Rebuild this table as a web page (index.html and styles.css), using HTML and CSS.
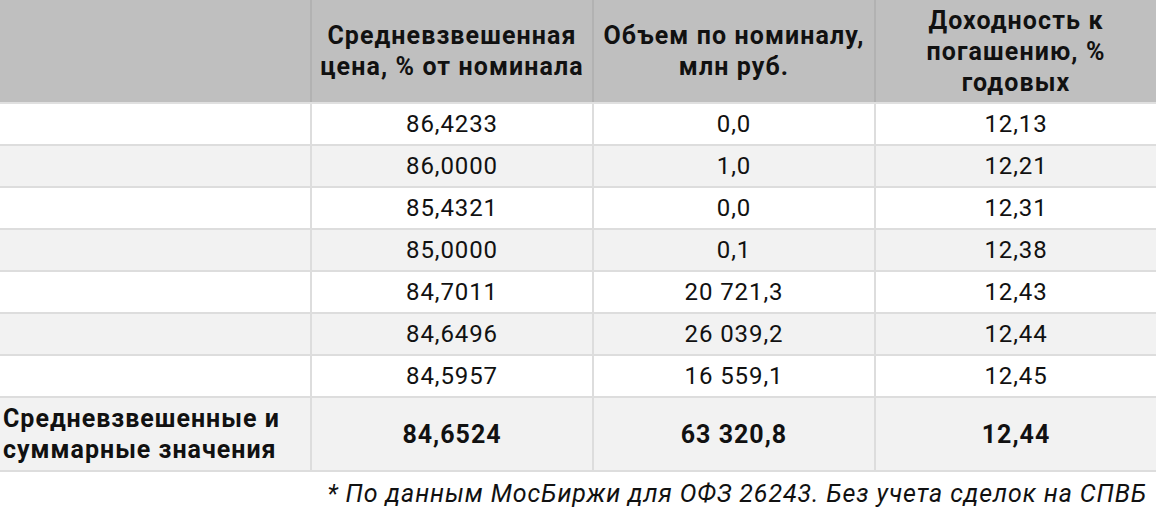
FILE: index.html
```html
<!DOCTYPE html>
<html lang="ru">
<head>
<meta charset="utf-8">
<link rel="stylesheet" href="styles.css">
</head>
<body>
<div class="table">
  <div class="row head">
    <div class="cell"></div>
    <div class="cell">Средневзвешенная<br>цена, % от номинала</div>
    <div class="cell">Объем по номиналу,<br>млн руб.</div>
    <div class="cell">Доходность к<br>погашению, %<br>годовых</div>
  </div>
  <div class="row"><div class="cell"></div><div class="cell">86,4233</div><div class="cell">0,0</div><div class="cell">12,13</div></div>
  <div class="row alt"><div class="cell"></div><div class="cell">86,0000</div><div class="cell">1,0</div><div class="cell">12,21</div></div>
  <div class="row"><div class="cell"></div><div class="cell">85,4321</div><div class="cell">0,0</div><div class="cell">12,31</div></div>
  <div class="row alt"><div class="cell"></div><div class="cell">85,0000</div><div class="cell">0,1</div><div class="cell">12,38</div></div>
  <div class="row"><div class="cell"></div><div class="cell">84,7011</div><div class="cell">20 721,3</div><div class="cell">12,43</div></div>
  <div class="row alt"><div class="cell"></div><div class="cell">84,6496</div><div class="cell">26 039,2</div><div class="cell">12,44</div></div>
  <div class="row"><div class="cell"></div><div class="cell">84,5957</div><div class="cell">16 559,1</div><div class="cell">12,45</div></div>
  <div class="row alt total">
    <div class="cell label">Средневзвешенные и<br>суммарные значения</div>
    <div class="cell">84,6524</div>
    <div class="cell">63 320,8</div>
    <div class="cell">12,44</div>
  </div>
</div>
<p class="note">* По данным МосБиржи для ОФЗ 26243. Без учета сделок на СПВБ</p>
</body>
</html>
```
FILE: styles.css
```css
html, body {
  margin: 0;
  padding: 0;
  background: #ffffff;
}
body {
  width: 1156px;
  font-family: Roboto, "Liberation Sans", sans-serif;
  color: #111111;
}
.table {
  display: flex;
  flex-direction: column;
}
.row {
  display: grid;
  grid-template-columns: 310px 280px 280px 280px;
  column-gap: 2px;
  background: #dddddd;
  border-bottom: 2px solid #dddddd;
  height: 40px;
}
.cell {
  background: #ffffff;
  display: flex;
  align-items: center;
  justify-content: center;
  text-align: center;
  font-size: 24px;
  letter-spacing: 0.9px;
}
.row.alt .cell {
  background: #f2f2f2;
}
.row.head {
  height: 102px;
  background: #b2b2b2;
  border-bottom-color: #e0e0e0;
}
.row.head .cell {
  background: #bfbfbf;
  font-weight: 700;
  line-height: 31px;
  letter-spacing: 1.1px;
  font-size: 25px;
}
.row.total {
  height: 72px;
}
.row.total .cell {
  font-weight: 700;
  font-size: 25px;
  letter-spacing: 1px;
}
.row.total .cell.label {
  justify-content: flex-start;
  text-align: left;
  padding-left: 3px;
  line-height: 31px;
  letter-spacing: 1px;
}
.note {
  margin: 0;
  padding: 7px 9px 0 0;
  text-align: right;
  font-style: italic;
  font-size: 25px;
  letter-spacing: 0.9px;
  white-space: nowrap;
}
```
